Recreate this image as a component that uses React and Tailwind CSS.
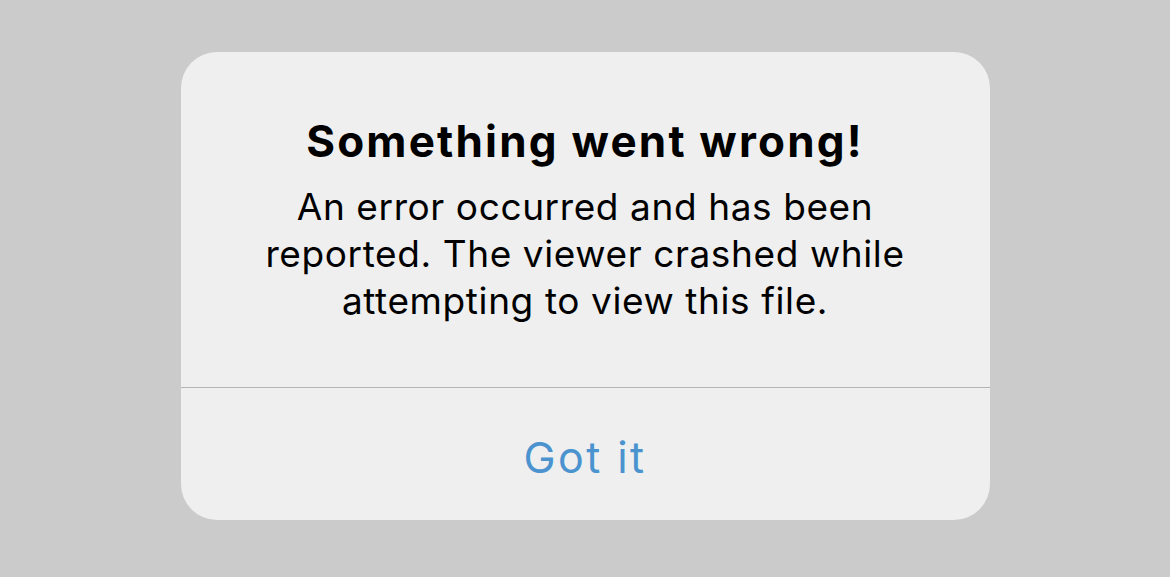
export default function App() {
  return (
    <div
      className="min-h-screen bg-[#cbcbcb] flex justify-center pt-[52px]"
      style={{ fontFamily: 'Inter, "Noto Sans", sans-serif' }}
    >
      <div className="w-[809px] h-[468px] bg-[#efefef] rounded-[36px] flex flex-col overflow-hidden">
        <div className="h-[335px] pt-[63px] flex flex-col items-center text-center text-black">
          <h1 className="text-[44px] leading-[52px] font-bold tracking-[2.2px]">
            Something went wrong!
          </h1>
          <p className="mt-[16px] text-[37px] leading-[47px] font-normal tracking-[0.6px]">
            An error occurred and has been
            <br />
            reported. The viewer crashed while
            <br />
            attempting to view this file.
          </p>
        </div>
        <div className="h-px bg-[#b4b4b4]" />
        <button className="flex-1 flex items-center justify-center pt-[6px] text-[43px] leading-none tracking-[2.4px] text-[#4a93cf]">
          Got it
        </button>
      </div>
    </div>
  )
}
